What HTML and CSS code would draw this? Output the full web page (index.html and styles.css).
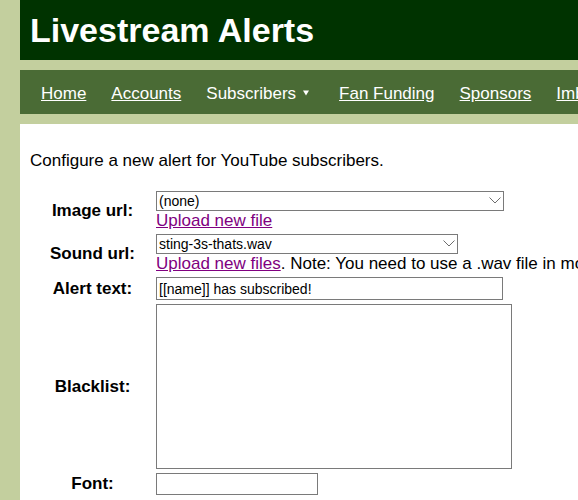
FILE: index.html
```html
<!DOCTYPE html>
<html>
<head>
<meta charset="utf-8">
<title>Livestream Alerts</title>
<link rel="stylesheet" href="styles.css">
</head>
<body>
<div class="page">
  <header class="masthead">
    <h1 class="title">Livestream Alerts</h1>
  </header>
  <nav class="menu">
    <a class="menu-link" href="#">Home</a>
    <a class="menu-link" href="#">Accounts</a>
    <span class="menu-item">Subscribers<svg class="caret" width="6" height="6" viewBox="0 0 6 6"><polygon points="0,0.5 6,0.5 3,5.5" fill="#ffffff"/></svg></span>
    <a class="menu-link" href="#">Fan Funding</a>
    <a class="menu-link" href="#">Sponsors</a>
    <a class="menu-link" href="#">Imbed</a>
    <a class="menu-link" href="#">Settings</a>
  </nav>
  <main class="content">
    <p class="intro">Configure a new alert for YouTube subscribers.</p>
    <table class="form">
      <tr>
        <th class="label">Image url:</th>
        <td class="field">
          <span class="select-wrap select-wide">
            <select class="select"><option>(none)</option></select>
            <svg class="chevron" width="12" height="7" viewBox="0 0 12 7"><polyline points="0.5,0.5 6,6 11.5,0.5" fill="none" stroke="#6d6d6d" stroke-width="1"/></svg>
          </span>
          <div class="line"><a class="upload" href="#">Upload new file</a></div>
        </td>
      </tr>
      <tr>
        <th class="label">Sound url:</th>
        <td class="field">
          <span class="select-wrap select-narrow">
            <select class="select"><option>sting-3s-thats.wav</option></select>
            <svg class="chevron" width="12" height="7" viewBox="0 0 12 7"><polyline points="0.5,0.5 6,6 11.5,0.5" fill="none" stroke="#6d6d6d" stroke-width="1"/></svg>
          </span>
          <div class="line"><a class="upload" href="#">Upload new files</a>. Note: You need to use a .wav file in most browsers for the sound to play.</div>
        </td>
      </tr>
      <tr>
        <th class="label">Alert text:</th>
        <td class="field"><input class="text text-wide" type="text" value="[[name]] has subscribed!"></td>
      </tr>
      <tr>
        <th class="label">Blacklist:</th>
        <td class="field"><textarea class="area"></textarea></td>
      </tr>
      <tr>
        <th class="label">Font:</th>
        <td class="field"><input class="text text-short" type="text" value=""></td>
      </tr>
    </table>
  </main>
</div>
</body>
</html>
```
FILE: styles.css
```css
html {
  overflow: hidden;
}

body {
  margin: 0;
  background: #c3cf9e;
  font-family: "Liberation Sans", Arial, sans-serif;
  color: #000000;
}

.page {
  width: 1000px;
  padding-left: 20px;
}

.masthead {
  background: #003300;
  padding: 11px 10px 10px;
}

.title {
  margin: 0;
  font-size: 34px;
  font-weight: bold;
  line-height: 39px;
  color: #ffffff;
}

.menu {
  margin-top: 10px;
  background: #4a6b35;
  padding: 14px 21px 10px;
  display: flex;
  gap: 25px;
  font-size: 17px;
  line-height: 20px;
  white-space: nowrap;
}

.menu-link {
  color: #ffffff;
  text-decoration: underline;
}

.menu-item {
  color: #ffffff;
  display: flex;
  align-items: center;
}

.caret {
  margin-left: 7px;
  margin-right: 5px;
  margin-top: -2px;
}

.content {
  margin-top: 10px;
  background: #ffffff;
  padding: 10px 10px 40px;
  min-height: 400px;
}

.intro {
  margin: 17px 0;
  font-size: 17px;
  line-height: normal;
}

.form {
  border-spacing: 2px;
  font-size: 17px;
}

.label {
  width: 119px;
  padding: 1px;
  text-align: center;
  vertical-align: middle;
  font-weight: bold;
}

.field {
  padding: 1px;
  text-align: left;
  vertical-align: top;
  white-space: nowrap;
}

.select-wrap {
  position: relative;
  display: block;
  height: 20px;
}

.select-wide {
  width: 348px;
}

.select-narrow {
  width: 302px;
}

.select {
  appearance: none;
  -webkit-appearance: none;
  display: block;
  box-sizing: border-box;
  width: 100%;
  height: 20px;
  margin: 0;
  padding: 0 20px 0 2px;
  border: 1px solid #7a7a7a;
  border-radius: 0;
  background: #ffffff;
  font-family: "Liberation Sans", Arial, sans-serif;
  font-size: 14px;
  color: #000000;
}

.chevron {
  position: absolute;
  right: 3px;
  top: 6px;
}

.line {
  line-height: 19px;
}

.upload {
  color: #800080;
  text-decoration: underline;
}

.text {
  display: block;
  box-sizing: border-box;
  height: 23px;
  margin: 0;
  padding: 0 2px;
  border: 1px solid #7a7a7a;
  border-radius: 0;
  font-family: "Liberation Sans", Arial, sans-serif;
  font-size: 14px;
  color: #000000;
  background: #ffffff;
}

.text-wide {
  width: 347px;
}

.text-short {
  width: 162px;
  height: 22px;
}

.area {
  display: block;
  box-sizing: border-box;
  width: 356px;
  height: 165px;
  margin: 0;
  padding: 2px;
  border: 1px solid #7a7a7a;
  border-radius: 0;
  resize: none;
  font-family: "Liberation Sans", Arial, sans-serif;
  font-size: 14px;
}
```
